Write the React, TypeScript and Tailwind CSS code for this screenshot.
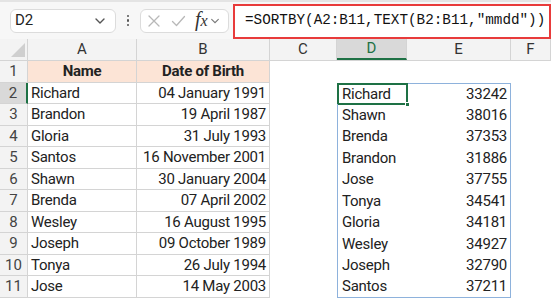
import React from 'react';

const cols = ['A', 'B', 'C', 'D', 'E', 'F'];
const widths = ['w-[109px]', 'w-[133px]', 'w-[67px]', 'w-[70px]', 'w-[104px]', 'w-[40px]'];

const people: [string, string][] = [
    ['Richard', '04 January 1991'],
    ['Brandon', '19 April 1987'],
    ['Gloria', '31 July 1993'],
    ['Santos', '16 November 2001'],
    ['Shawn', '30 January 2004'],
    ['Brenda', '07 April 2002'],
    ['Wesley', '16 August 1995'],
    ['Joseph', '09 October 1989'],
    ['Tonya', '26 July 1994'],
    ['Jose', '14 May 2003'],
];

const sorted: [string, number][] = [
    ['Richard', 33242],
    ['Shawn', 38016],
    ['Brenda', 37353],
    ['Brandon', 31886],
    ['Jose', 37755],
    ['Tonya', 34541],
    ['Gloria', 34181],
    ['Wesley', 34927],
    ['Joseph', 32790],
    ['Santos', 37211],
];

const Chevron = () => (
    <svg width="12" height="8" viewBox="0 0 12 8" fill="none" stroke="#555" strokeWidth="1.4" strokeLinecap="round" strokeLinejoin="round">
        <path d="M2 2l4 4 4-4" />
    </svg>
);

const App: React.FC = () => {
    return (
        <div className="w-[551px] h-[300px] overflow-hidden bg-white text-[#222] whitespace-nowrap" style={{ fontFamily: 'Roboto, "Liberation Sans", sans-serif' }}>
            {/* formula bar */}
            <div className="h-[39px] flex items-center bg-[#f7f7f7] border-t-2 border-[#e4e4e4]">
                <div className="ml-[10px] w-[106px] h-[24px] bg-white border border-[#dcdcdc] rounded-md flex items-center justify-between pl-[4px] pr-[9px]">
                    <span className="text-[15px]">D2</span>
                    <Chevron />
                </div>
                <div className="w-[24px] flex flex-col items-center gap-[2px]">
                    <span className="w-[2.5px] h-[2.5px] rounded-full bg-[#555]" />
                    <span className="w-[2.5px] h-[2.5px] rounded-full bg-[#555]" />
                    <span className="w-[2.5px] h-[2.5px] rounded-full bg-[#555]" />
                </div>
                <div className="w-[89px] h-[24px] bg-white border border-[#dcdcdc] rounded-md flex items-center pl-[6px]">
                    <svg width="14" height="14" viewBox="0 0 14 14" stroke="#b8b8b8" strokeWidth="1.3" strokeLinecap="round">
                        <path d="M2 2l10 10M12 2L2 12" />
                    </svg>
                    <svg className="ml-[10px]" width="15" height="14" viewBox="0 0 15 14" fill="none" stroke="#b8b8b8" strokeWidth="1.3" strokeLinecap="round" strokeLinejoin="round">
                        <path d="M1.5 7.5l4 4 8-9" />
                    </svg>
                    <span className="ml-[9px] -mt-[4px] text-[20px] italic leading-none text-[#333]" style={{ fontFamily: '"Liberation Serif", serif' }}>
                        f<span className="text-[16px]">x</span>
                    </span>
                    <span className="ml-[2px]"><svg width="10" height="8" viewBox="0 0 12 8" fill="none" stroke="#777" strokeWidth="1.3" strokeLinecap="round"><path d="M2 2l4 4 4-4" /></svg></span>
                </div>
                <div className="ml-[4px] flex-1 h-[35px] mt-[1px] bg-white border-2 border-[#e83b3b] flex items-center pl-[10px]">
                    <span className="text-[14.3px] text-[#111]" style={{ fontFamily: '"Liberation Mono", monospace' }}>
                        =SORTBY(A2:B11,TEXT(B2:B11,"mmdd"))
                    </span>
                </div>
            </div>

            {/* column headers */}
            <div className="flex h-[22px] bg-[#f3f3f3] border-b border-[#d4d4d4] text-[15px] text-[#333]">
                <div className="w-[28px] border-r border-[#d4d4d4] relative">
                    <svg className="absolute right-[2px] bottom-[3px]" width="14" height="14" viewBox="0 0 14 14">
                        <path d="M14 0L14 14L0 14Z" fill="#cfcfcf" />
                    </svg>
                </div>
                {cols.map((c, i) => (
                    <div
                        key={c}
                        className={`${widths[i]} flex items-center justify-center border-r border-[#d4d4d4] ${c === 'D' ? 'bg-[#d9d9d9] border-b-2 border-b-[#1e7145] text-[#1e7145]' : ''}`}
                    >
                        {c}
                    </div>
                ))}
            </div>

            {/* rows */}
            {Array.from({ length: 11 }).map((_, r) => {
                const row = r + 1;
                const p = people[r - 1];
                const s = sorted[r - 1];
                const inSpill = row >= 2 && row <= 11;
                const spillTop = row === 2 ? 'border-t border-t-[#8eb2dc]' : '';
                const spillBottom = row === 11 ? 'border-b border-b-[#8eb2dc]' : '';
                return (
                    <div key={row} className="flex h-[21.5px] text-[15px] tracking-[-0.25px]">
                        <div
                            className={`w-[28px] flex items-center justify-center tracking-normal text-[#444] border-r border-b border-[#d4d4d4] ${row === 2 ? 'bg-[#d9d9d9] border-r-2 border-r-[#1e7145] text-[#1e7145]' : 'bg-[#f3f3f3]'}`}
                        >
                            {row}
                        </div>
                        {row === 1 ? (
                            <>
                                <div className="w-[109px] bg-[#fce4d6] border-r border-b border-[#d4d4d4] flex items-center justify-center font-bold">Name</div>
                                <div className="w-[133px] bg-[#fce4d6] border-r border-b border-[#d4d4d4] flex items-center justify-center font-bold">Date of Birth</div>
                            </>
                        ) : (
                            <>
                                <div className="w-[109px] border-r border-b border-[#d4d4d4] flex items-center pl-[3px]">{p[0]}</div>
                                <div className="w-[133px] border-r border-b border-[#d4d4d4] flex items-center justify-end pr-[3px]">{p[1]}</div>
                            </>
                        )}
                        <div className="w-[67px]" />
                        <div className={`w-[70px] relative flex items-center pl-[4px] ${inSpill ? `border-l border-l-[#8eb2dc] ${spillTop} ${spillBottom}` : ''}`}>
                            {s ? s[0] : ''}
                            {row === 2 && (
                                <div className="absolute -left-[1px] -top-[1px] w-[71px] h-[22.5px] border-2 border-[#1e7145]">
                                    <span className="absolute -right-[4px] -bottom-[4px] w-[5px] h-[5px] bg-[#1e7145] border border-white" />
                                </div>
                            )}
                        </div>
                        <div className={`w-[104px] flex items-center justify-end pr-[3px] ${inSpill ? `border-r border-r-[#8eb2dc] ${spillTop} ${spillBottom}` : ''}`}>
                            {s ? s[1] : ''}
                        </div>
                        <div className="w-[40px]" />
                    </div>
                );
            })}
        </div>
    );
};

export default App;
